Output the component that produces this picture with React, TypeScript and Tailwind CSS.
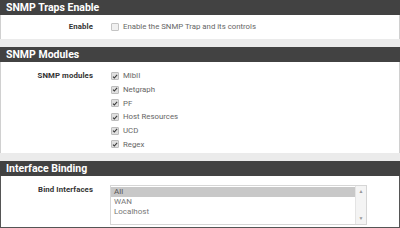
import React from 'react';

const modules = ['MibII', 'Netgraph', 'PF', 'Host Resources', 'UCD', 'Regex'];
const interfaces = ['All', 'WAN', 'Localhost'];

function Check({ checked }: { checked: boolean }) {
  return (
    <span
      className={
        'flex h-[8px] w-[8px] shrink-0 items-center justify-center rounded-[1px] border ' +
        (checked ? 'border-[#bdbdbd] bg-[#e0e0e0]' : 'border-[#c4c4c4] bg-[#f0f0f0]')
      }
    >
      {checked && (
        <svg viewBox="0 0 8 8" className="h-[7px] w-[7px]">
          <path d="M1.3 4.2 L3.1 6 L6.8 1.8" fill="none" stroke="#3a3a3a" strokeWidth="1.5" />
        </svg>
      )}
    </span>
  );
}

function Header({ title }: { title: string }) {
  return (
    <div className="flex h-[15px] items-center bg-[#424242] pl-[6px] text-[10.5px] font-bold text-white">
      {title}
    </div>
  );
}

export default function App() {
  return (
    <div
      className="h-[228px] w-[400px] overflow-hidden bg-[#ebebeb] text-[#555]"
      style={{ fontFamily: 'Roboto, "Liberation Sans", sans-serif' }}
    >
      <Header title="SNMP Traps Enable" />
      <div className="flex h-[24px] items-center border-x border-[#d0d0d0] bg-white">
        <div className="w-[93px] pr-[1px] text-right text-[7.8px] font-bold tracking-[0.1px] text-[#333]">Enable</div>
        <div className="ml-[17px] flex items-center gap-[4px] text-[7.8px] text-[#666]">
          <Check checked={false} />
          <span>Enable the SNMP Trap and its controls</span>
        </div>
      </div>
      <div className="h-[8px]" />

      <Header title="SNMP Modules" />
      <div className="flex h-[91px] border-x border-[#d0d0d0] bg-white pt-[9px]">
        <div className="w-[93px] pr-[1px] text-right text-[7.8px] font-bold leading-[10px] tracking-[0.1px] text-[#333]">SNMP modules</div>
        <div className="ml-[17px] flex flex-col gap-[3.7px]">
          {modules.map(m => (
            <div key={m} className="flex h-[10px] items-center gap-[4px] text-[7.8px] text-[#666]">
              <Check checked />
              <span>{m}</span>
            </div>
          ))}
        </div>
      </div>
      <div className="h-[8px]" />

      <Header title="Interface Binding" />
      <div className="flex h-[52px] border-x border-b border-[#555] bg-white pt-[9px]">
        <div className="w-[93px] pr-[1px] text-right text-[7.8px] font-bold leading-[10px] tracking-[0.1px] text-[#333]">Bind Interfaces</div>
        <div className="ml-[16px] flex h-[40px] w-[257px] border border-[#d6d6d6]">
          <div className="flex flex-1 flex-col pt-[1px] text-[8px] leading-[10px] text-[#777]">
            {interfaces.map((i, idx) => (
              <div key={i} className={'pl-[3px] ' + (idx === 0 ? 'bg-[#c8c8c8] text-[#555]' : '')}>
                {i}
              </div>
            ))}
          </div>
          <div className="flex w-[11px] flex-col items-center justify-between border-l border-[#e4e4e4] bg-[#f4f4f4] py-[3px] text-[5px] leading-none text-[#999]">
            <span>▲</span>
            <span>▼</span>
          </div>
        </div>
      </div>
    </div>
  );
}
